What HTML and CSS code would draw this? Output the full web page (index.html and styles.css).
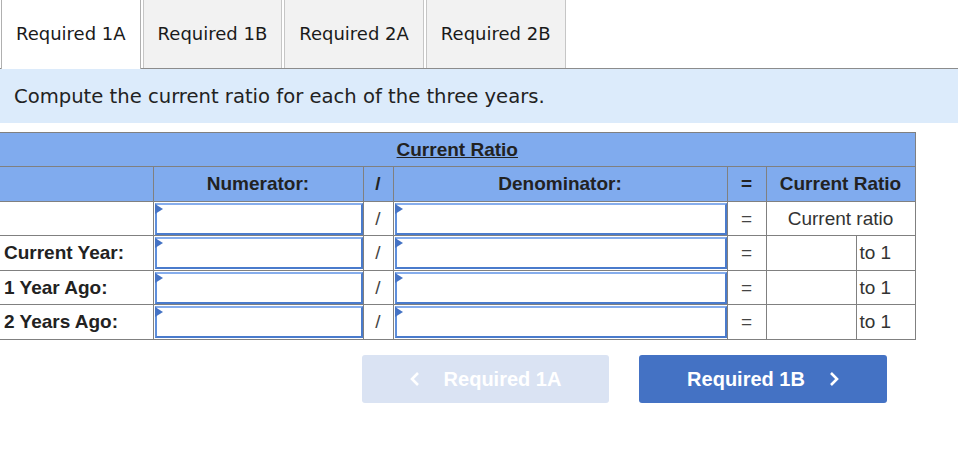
FILE: index.html
```html
<!DOCTYPE html>
<html>

<head>
  <meta charset="utf-8">
  <title>Current ratio</title>
  <link rel="stylesheet" href="styles.css">
</head>

<body>
  <div class="tabs">
    <div class="tab active">Required 1A</div>
    <div class="tab">Required 1B</div>
    <div class="tab">Required 2A</div>
    <div class="tab">Required 2B</div>
  </div>

  <div class="prompt">Compute the current ratio for each of the three years.</div>

  <table class="ratio">
    <colgroup>
      <col class="c-label">
      <col class="c-num">
      <col class="c-op">
      <col class="c-den">
      <col class="c-eq">
      <col class="c-res">
      <col class="c-unit">
    </colgroup>
    <tr class="head r1">
      <th colspan="7"><u>Current Ratio</u></th>
    </tr>
    <tr class="head r2">
      <th></th>
      <th>Numerator:</th>
      <th>/</th>
      <th>Denominator:</th>
      <th>=</th>
      <th colspan="2">Current Ratio</th>
    </tr>
    <tr class="r1">
      <td></td>
      <td class="cell"><div class="field"><input type="text"></div></td>
      <td class="op">/</td>
      <td class="cell"><div class="field"><input type="text"></div></td>
      <td class="op">=</td>
      <td colspan="2" class="res">Current ratio</td>
    </tr>
    <tr class="r2">
      <td class="label">Current Year:</td>
      <td class="cell"><div class="field"><input type="text"></div></td>
      <td class="op">/</td>
      <td class="cell"><div class="field"><input type="text"></div></td>
      <td class="op">=</td>
      <td></td>
      <td class="unit">to 1</td>
    </tr>
    <tr class="r1">
      <td class="label">1 Year Ago:</td>
      <td class="cell"><div class="field"><input type="text"></div></td>
      <td class="op">/</td>
      <td class="cell"><div class="field"><input type="text"></div></td>
      <td class="op">=</td>
      <td></td>
      <td class="unit">to 1</td>
    </tr>
    <tr class="r2">
      <td class="label">2 Years Ago:</td>
      <td class="cell"><div class="field"><input type="text"></div></td>
      <td class="op">/</td>
      <td class="cell"><div class="field"><input type="text"></div></td>
      <td class="op">=</td>
      <td></td>
      <td class="unit">to 1</td>
    </tr>
  </table>

  <div class="nav">
    <button class="navBtn prev" type="button">
      <svg width="10" height="16" viewBox="0 0 10 16"><polyline points="8,2 2,8 8,14" fill="none" stroke="#fff" stroke-width="2.6"/></svg>
      <span>Required 1A</span>
    </button>
    <button class="navBtn next" type="button">
      <span>Required 1B</span>
      <svg width="10" height="16" viewBox="0 0 10 16"><polyline points="2,2 8,8 2,14" fill="none" stroke="#fff" stroke-width="2.6"/></svg>
    </button>
  </div>
</body>

</html>
```

FILE: styles.css
```css
body {
  margin: 0;
  font-family: "Liberation Sans", Arial, sans-serif;
  color: #222;
  background: #fff;
}

.tabs {
  display: flex;
  gap: 2px;
  padding-left: 1px;
  height: 68px;
  border-bottom: 1px solid #8c8c8c;
}

.tab {
  padding: 0 14px;
  line-height: 68px;
  height: 68px;
  font-family: "DejaVu Sans", Verdana, sans-serif;
  font-size: 18px;
  color: #1a1a1a;
  background-color: #f2f2f2;
  border-left: 1px solid #c6c6c6;
  border-right: 1px solid #c6c6c6;
}

.tab.active {
  background-color: #fff;
  height: 69px;
  border-left-color: #b0b0b0;
  border-right-color: #b0b0b0;
}

.prompt {
  height: 54px;
  line-height: 56px;
  padding-left: 14px;
  background-color: #dcebfb;
  font-family: "DejaVu Sans", Verdana, sans-serif;
  font-size: 19.6px;
  color: #222;
}

.ratio {
  margin-top: 9px;
  border-collapse: collapse;
  font-size: 19px;
}

.c-label { width: 153px; }
.c-num { width: 210px; }
.c-op { width: 30px; }
.c-den { width: 334px; }
.c-eq { width: 39px; }
.c-res { width: 90px; }
.c-unit { width: 59px; }

.ratio th,
.ratio td {
  border: 1px solid #808080;
  padding: 0;
}

.ratio tr > :first-child {
  border-left: none;
}

.ratio tr.r1 > * { height: 33px; }
.ratio tr.r2 > * { height: 34px; }

.ratio th {
  background-color: #80abee;
  font-weight: bold;
  color: #222;
  text-align: center;
}

.ratio td.label {
  font-weight: bold;
  padding-left: 4px;
  text-align: left;
}

.ratio td.op {
  text-align: center;
  color: #444;
}

.ratio td.res {
  text-align: center;
  color: #333;
}

.ratio td.unit {
  padding-left: 3px;
  color: #333;
}

.ratio td.cell {
  padding: 0 0 0 1px;
  vertical-align: middle;
}

.field {
  position: relative;
  height: 32px;
}

.field::before {
  content: "";
  position: absolute;
  left: 0;
  top: 1px;
  border-top: 5px solid transparent;
  border-bottom: 5px solid transparent;
  border-left: 8px solid #4472c4;
}

.field input {
  display: block;
  box-sizing: border-box;
  width: 100%;
  height: 32px;
  margin: 0;
  border: 2px solid;
  border-color: #86adec #4a7bcc #4a7bcc #5f8fdc;
  background: #fff;
  outline: none;
}

.nav {
  display: flex;
  gap: 30px;
  margin: 15px 0 0 362px;
}

.navBtn {
  display: flex;
  align-items: center;
  justify-content: center;
  gap: 24px;
  width: 247px;
  height: 48px;
  border: none;
  border-radius: 3px;
  color: white;
  font-family: "Liberation Sans", Arial, sans-serif;
  font-size: 20px;
  font-weight: bold;
  cursor: pointer;
}

.navBtn.prev {
  background-color: #dae3f3;
}

.navBtn.next {
  background-color: #4472c4;
  width: 248px;
}
```
